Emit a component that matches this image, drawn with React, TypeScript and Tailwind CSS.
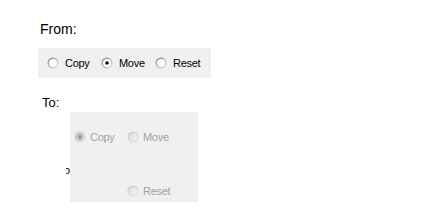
import React from "react";

type RadioProps = { checked?: boolean; disabled?: boolean };

function RadioDot({ checked = false, disabled = false }: RadioProps) {
  const id = disabled ? "rd" : "re";
  return (
    <svg width="12" height="12" viewBox="0 0 12 12" className="shrink-0">
      <defs>
        <linearGradient id={`${id}-ring`} x1="0" y1="0" x2="1" y2="1">
          <stop offset="0" stopColor={disabled ? "#c4c4c4" : "#7e7e7e"} />
          <stop offset="1" stopColor={disabled ? "#e4e4e4" : "#e8e8e8"} />
        </linearGradient>
        <linearGradient id={`${id}-fill`} x1="0" y1="0" x2="1" y2="1">
          <stop offset="0" stopColor={disabled ? "#dcdcdc" : "#ffffff"} />
          <stop offset="1" stopColor={disabled ? "#f4f4f4" : "#ffffff"} />
        </linearGradient>
      </defs>
      <circle cx="6" cy="6" r="5.5" fill={`url(#${id}-ring)`} />
      <circle cx="6" cy="6" r="4.1" fill={`url(#${id}-fill)`} />
      {checked && !disabled && <circle cx="6" cy="6" r="1.8" fill="#111" />}
      {checked && disabled && (
        <>
          <circle cx="6" cy="6" r="3.6" fill="none" stroke="#b8b8b8" strokeWidth="0.8" />
          <circle cx="6" cy="6" r="2.4" fill="#9c9c9c" />
        </>
      )}
    </svg>
  );
}

function Option({
  label,
  checked,
  disabled,
  width,
  gap,
}: {
  label: string;
  checked?: boolean;
  disabled?: boolean;
  width?: string;
  gap: string;
}) {
  return (
    <label className={`flex items-center ${gap} ${width ?? ""}`}>
      <RadioDot checked={checked} disabled={disabled} />
      <span
        className={`text-[11px] leading-[12px] tracking-[-0.3px] ${
          disabled ? "text-[#a0a0a0]" : "text-black"
        }`}
      >
        {label}
      </span>
    </label>
  );
}

export default function App() {
  return (
    <div
      className="h-[217px] w-[429px] bg-white"
      style={{ fontFamily: '"Liberation Sans", Arial, sans-serif' }}
    >
      <section className="pl-[38px] pt-[21px]">
        <p className="ml-[2px] text-[14px] leading-[16px] text-black">From:</p>
        <div className="mt-[11px] flex h-[30px] w-[173px] items-center bg-[#f0f0f0] pl-[9px]">
          <Option label="Copy" width="w-[54px]" gap="gap-[6px]" />
          <Option label="Move" checked width="w-[54px]" gap="gap-[6px]" />
          <Option label="Reset" gap="gap-[6px]" />
        </div>
      </section>

      <section className="mt-[17px]">
        <p className="ml-[42px] text-[13px] leading-[15px] text-black">To:</p>
        <div className="mt-[2px] flex">
          <div className="flex w-[70px] justify-end pt-[52px]">
            <div className="h-[12px] w-[4px] overflow-hidden text-[11px] leading-[12px] text-black">
              <span className="-ml-[2px] block">o</span>
            </div>
          </div>
          <div className="h-[90px] w-[128px] bg-[#f0f0f0] pl-[4px] pt-[19px]">
            <div className="flex items-center">
              <Option label="Copy" checked disabled width="w-[53px]" gap="gap-[4px]" />
              <Option label="Move" disabled gap="gap-[4px]" />
            </div>
            <div className="mt-[42px] pl-[53px]">
              <Option label="Reset" disabled gap="gap-[4px]" />
            </div>
          </div>
        </div>
      </section>
    </div>
  );
}
